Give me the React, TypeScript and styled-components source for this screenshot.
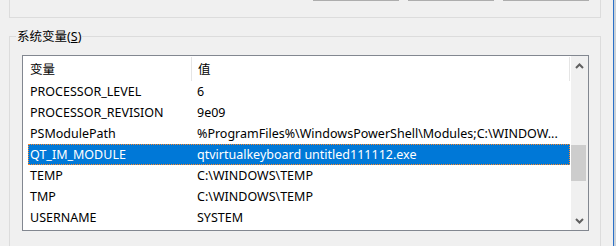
import React from "react";
import styled, { createGlobalStyle } from "styled-components";

const GlobalStyle = createGlobalStyle`
  html, body { margin: 0; padding: 0; background: #f0f0f0; }
  body {
    width: 616px; height: 246px; overflow: hidden;
    font-family: "Noto Sans", "Noto Sans CJK SC", sans-serif;
    font-size: 12.5px; color: #000;
  }
`;

const Window = styled.div`
  display: flex;
  width: 616px;
  height: 246px;
  overflow: hidden;
`;

const Content = styled.div`
  width: 613px;
  padding-left: 9px;
  box-sizing: border-box;
  display: flex;
  flex-direction: column;
`;

const EdgeBlue = styled.div`
  width: 1px;
  background: #2b70c8;
`;

const EdgeGray = styled.div`
  width: 2px;
  background: #cbd3da;
`;

const UserGroup = styled.div`
  width: 592px;
  height: 18px;
  flex: none;
  box-sizing: border-box;
  border: 1px solid #dcdcdc;
  border-top: none;
  display: flex;
  justify-content: flex-end;
  align-items: flex-start;
  gap: 9px;
  padding-right: 11px;
`;

const Button = styled.div`
  width: 86px;
  height: 23px;
  margin-top: -22px;
  box-sizing: border-box;
  background: #e1e1e1;
  border: 1px solid #adadad;
`;

const Group = styled.fieldset`
  margin: 10px 0 0 0;
  padding: 0;
  width: 592px;
  min-width: 0;
  height: 240px;
  flex: none;
  box-sizing: border-box;
  border: 1px solid #dcdcdc;
`;

const Legend = styled.legend`
  margin-left: 6px;
  padding: 0 1px;
  height: 17px;
  line-height: 17px;
  font-size: 12.5px;
`;

const Key = styled.span`
  text-decoration: underline;
`;

const ListView = styled.div`
  margin: 10px 0 0 12px;
  width: 567px;
  height: 176px;
  box-sizing: border-box;
  border: 1px solid #828790;
  background: #fff;
  display: flex;
`;

const ListBody = styled.div`
  flex: 1;
  min-width: 0;
  display: flex;
  flex-direction: column;
`;

const Header = styled.div`
  display: grid;
  grid-template-columns: 168px 1px 1fr 1px;
  height: 25px;
  padding-right: 1px;
`;

const HeaderCell = styled.div<{ $pad: number }>`
  display: flex;
  align-items: center;
  padding-left: ${(p) => p.$pad}px;
  white-space: nowrap;
`;

const HeaderDivider = styled.div`
  margin-top: 1px;
  background: #e5e5e5;
`;

const Row = styled.div<{ $selected?: boolean }>`
  display: grid;
  grid-template-columns: 163px 1fr;
  height: 21px;
  margin: 0 1px 0 5px;
  box-sizing: border-box;
  border: 1px dotted ${(p) => (p.$selected ? "#ff8728" : "transparent")};
  background: ${(p) => (p.$selected ? "#0078d7" : "transparent")};
  color: ${(p) => (p.$selected ? "#fff" : "#000")};
  align-items: center;
`;

const Cell = styled.div<{ $pad: number }>`
  padding-left: ${(p) => p.$pad}px;
  white-space: nowrap;
  overflow: hidden;
  line-height: 19px;
`;

const ScrollBar = styled.div`
  width: 17px;
  flex: none;
  background: #f0f0f0;
  display: flex;
  flex-direction: column;
`;

const ArrowButton = styled.div<{ $down?: boolean }>`
  height: 17px;
  flex: none;
  display: flex;
  justify-content: center;
  align-items: ${(p) => (p.$down ? "flex-end" : "flex-start")};
  padding: ${(p) => (p.$down ? "0 0 6px 0" : "7px 0 0 0")};
  box-sizing: border-box;
`;

const Track = styled.div`
  flex: 1;
`;

const Thumb = styled.div`
  width: 15px;
  height: 36px;
  margin: 72px 0 0 0;
  background: #cdcdcd;
`;

const Chevron = ({ down }: { down?: boolean }) => (
  <svg width="9" height="6" viewBox="0 0 9 6">
    <polyline
      points={down ? "1,1 4.5,4.5 8,1" : "1,5 4.5,1.5 8,5"}
      fill="none"
      stroke="#606060"
      strokeWidth="2"
    />
  </svg>
);

const rows = [
  ["PROCESSOR_LEVEL", "6"],
  ["PROCESSOR_REVISION", "9e09"],
  ["PSModulePath", "%ProgramFiles%\\WindowsPowerShell\\Modules;C:\\WINDOW..."],
  ["QT_IM_MODULE", "qtvirtualkeyboard untitled111112.exe"],
  ["TEMP", "C:\\WINDOWS\\TEMP"],
  ["TMP", "C:\\WINDOWS\\TEMP"],
  ["USERNAME", "SYSTEM"],
];

export default function App() {
  return (
    <>
      <GlobalStyle />
      <Window>
        <Content>
          <UserGroup>
            <Button />
            <Button />
            <Button />
          </UserGroup>
          <Group>
            <Legend>
              系统变量(<Key>S</Key>)
            </Legend>
            <ListView>
              <ListBody>
                <Header>
                  <HeaderCell $pad={7}>变量</HeaderCell>
                  <HeaderDivider />
                  <HeaderCell $pad={6}>值</HeaderCell>
                  <HeaderDivider />
                </Header>
                {rows.map(([name, value]) => (
                  <Row key={name} $selected={name === "QT_IM_MODULE"}>
                    <Cell $pad={1}>{name}</Cell>
                    <Cell $pad={5}>{value}</Cell>
                  </Row>
                ))}
              </ListBody>
              <ScrollBar>
                <ArrowButton>
                  <Chevron />
                </ArrowButton>
                <Track>
                  <Thumb />
                </Track>
                <ArrowButton $down>
                  <Chevron down />
                </ArrowButton>
              </ScrollBar>
            </ListView>
          </Group>
        </Content>
        <EdgeBlue />
        <EdgeGray />
      </Window>
    </>
  );
}
